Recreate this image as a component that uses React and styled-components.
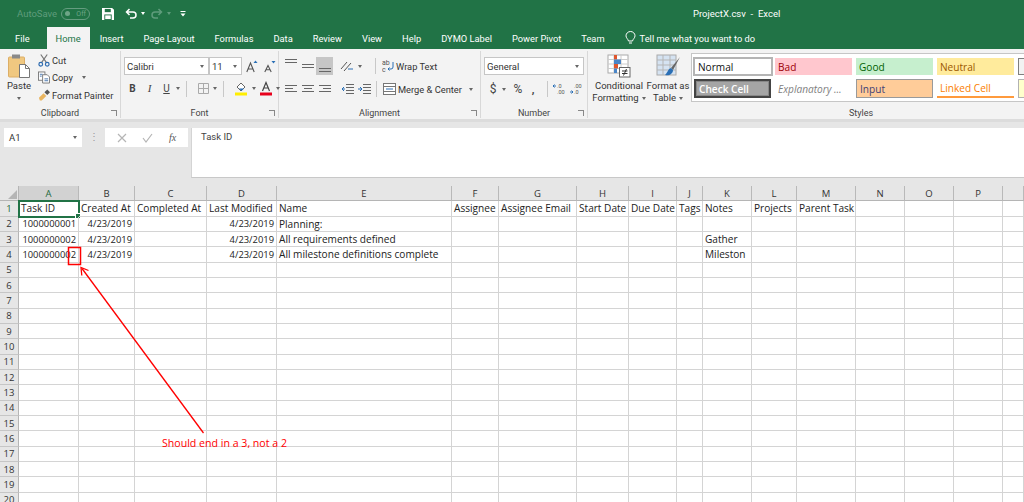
import React from 'react';
import styled, { createGlobalStyle } from 'styled-components';

const UI = 'Roboto, "Open Sans", sans-serif';
const SHEET = '"Open Sans", "Noto Sans", sans-serif';

const COLS = [
  ['A', 60], ['B', 56], ['C', 72], ['D', 70], ['E', 175], ['F', 47], ['G', 78], ['H', 52], ['I', 48],
  ['J', 26], ['K', 49], ['L', 45], ['M', 59], ['N', 49], ['O', 49], ['P', 49], ['Q', 21],
];

const ROWS = {
  1: { A: 'Task ID', B: 'Created At', C: 'Completed At', D: 'Last Modified', E: 'Name', F: 'Assignee', G: 'Assignee Email', H: 'Start Date', I: 'Due Date', J: 'Tags', K: 'Notes', L: 'Projects', M: 'Parent Task' },
  2: { A: '1000000001', B: '4/23/2019', D: '4/23/2019', E: 'Planning:' },
  3: { A: '1000000002', B: '4/23/2019', D: '4/23/2019', E: 'All requirements defined', K: 'Gather' },
  4: { A: '1000000002', B: '4/23/2019', D: '4/23/2019', E: 'All milestone definitions complete', K: 'Mileston' },
};

const TABS = ['File', 'Home', 'Insert', 'Page Layout', 'Formulas', 'Data', 'Review', 'View', 'Help', 'DYMO Label', 'Power Pivot', 'Team'];

const STYLES = [
  ['Normal', 'normal'], ['Bad', 'bad'], ['Good', 'good'], ['Neutral', 'neutral'], ['', 'calc'],
  ['Check Cell', 'check'], ['Explanatory ...', 'explain'], ['Input', 'input'], ['Linked Cell', 'linked'], ['', 'note'],
];

const STYLE_LOOK = {
  normal: 'background:#fff;color:#111;border:2px solid #b5b5b5;margin-right:2px;',
  bad: 'background:#ffc7ce;color:#9c0006;margin:1px 4px 1px 0;',
  good: 'background:#c6efce;color:#006100;margin:1px 4px 1px 0;',
  neutral: 'background:#ffeb9c;color:#9c5700;margin:1px 4px 1px 0;',
  calc: 'background:#f2f2f2;border:1px solid #7f7f7f;margin:1px 0;',
  check: 'background:#a5a5a5;color:#fff;font-weight:600;border:2px solid #444;outline:1px solid #888;outline-offset:-3px;margin:0 4px 0 1px;',
  explain: 'background:#fff;color:#7f7f7f;font-style:italic;margin-right:4px;',
  input: 'background:#ffcc99;color:#3f3f76;border:1px solid #9a9a9a;margin-right:4px;',
  linked: 'background:#fff;color:#fa7d00;border-bottom:2px solid #ff9a3c;margin-right:4px;',
  note: 'background:#ffffcc;border:1px solid #b2b2b2;',
};

const Global = createGlobalStyle`
  html, body { margin: 0; height: 100%; overflow: hidden; background: #fff; }
  #root { height: 100%; }
`;

const Page = styled.div`
  position: relative;
  width: 1024px;
  height: 502px;
  overflow: hidden;
  font-family: ${UI};
  color: #333;
`;

const Svg = styled.svg`
  display: block;
  flex: none;
`;

const Gap = styled.span`
  flex: none;
  width: ${p => p.$w}px;
`;

const TitleBar = styled.div`
  height: 27px;
  background: #217346;
  display: grid;
  grid-template-columns: 693px auto;
  align-items: center;
`;

const Quick = styled.div`
  display: flex;
  align-items: center;
  padding-left: 17px;
`;

const AutoSave = styled.span`
  width: 44px;
  font-size: 9.5px;
  color: #5f9c7c;
`;

const Toggle = styled.span`
  box-sizing: border-box;
  width: 29px;
  height: 12px;
  border: 1px solid #659d80;
  border-radius: 6px;
  display: flex;
  align-items: center;
  justify-content: space-between;
  padding: 0 3px;
  margin-right: 12px;
  font-size: 7px;
  color: #6ea587;
  &::before {
    content: '';
    width: 5px;
    height: 5px;
    border-radius: 50%;
    background: #6ea587;
  }
`;

const DocTitle = styled.div`
  font-size: 9.5px;
  color: #fff;
  white-space: pre;
`;

const TabBar = styled.div`
  height: 22px;
  background: #217346;
  display: flex;
  align-items: stretch;
`;

const Tab = styled.div`
  padding: 0 10px;
  display: flex;
  align-items: center;
  font-size: 9.3px;
  white-space: nowrap;
  color: #fff;
  ${p => p.$first && 'margin-left: 5px; margin-right: 7px;'}
  ${p => p.$active && 'background: #f3f3f3; color: #217346; padding: 0 9px;'}
`;

const TellMe = styled.div`
  display: flex;
  align-items: center;
  gap: 4px;
  margin-left: 10px;
  font-size: 9.3px;
  color: #fff;
`;

const Ribbon = styled.div`
  height: 70px;
  background: #f3f3f3;
  display: flex;
  border-bottom: 3px solid #dcdcdc;
  overflow: hidden;
`;

const Group = styled.div`
  position: relative;
  width: ${p => p.$w}px;
  flex: none;
  box-sizing: border-box;
  display: flex;
  flex-direction: column;
  border-right: ${p => (p.$last ? 'none' : '1px solid #d8d8d8')};
  margin: 2px 0 1px;
`;

const GroupBody = styled.div`
  flex: 1;
  display: flex;
  min-height: 0;
`;

const GroupName = styled.div`
  height: 14px;
  line-height: 18px;
  text-align: center;
  font-size: 9px;
  color: #444;
  ${p => p.$w && `width: ${p.$w}px; margin-left: ${p.$ml}px;`}
`;

const Launcher = styled.span`
  position: absolute;
  right: 3px;
  bottom: 2px;
  width: 5px;
  height: 5px;
  border-left: 1px solid #888;
  border-bottom: 1px solid #888;
  transform: rotate(180deg);
`;

const Stack = styled.div`
  display: flex;
  flex-direction: column;
  padding: ${p => p.$pad || 0};
`;

const Row = styled.div`
  display: flex;
  align-items: center;
  height: ${p => p.$h || 18}px;
  margin: ${p => p.$m || 0};
`;

const Big = styled.div`
  width: ${p => p.$w}px;
  flex: none;
  display: flex;
  flex-direction: column;
  align-items: center;
  font-size: 9.5px;
  line-height: 12px;
  text-align: center;
  white-space: nowrap;
  padding-top: ${p => p.$top || 2}px;
  & > svg { margin-bottom: 2px; }
`;

const Small = styled.div`
  display: flex;
  align-items: center;
  gap: ${p => (p.$gap === undefined ? 4 : p.$gap)}px;
  font-size: 9.3px;
  white-space: nowrap;
`;

const Caret = styled.span`
  flex: none;
  display: ${p => (p.$inline ? 'inline-block' : 'block')};
  width: 0;
  height: 0;
  border-left: 2.5px solid transparent;
  border-right: 2.5px solid transparent;
  border-top: 3px solid ${p => p.$c || '#666'};
  margin: ${p => p.$m || '0 0 0 4px'};
`;

const Combo = styled.div`
  box-sizing: border-box;
  width: ${p => p.$w}px;
  height: 18px;
  background: #fff;
  border: 1px solid #c6c6c6;
  display: flex;
  align-items: center;
  justify-content: space-between;
  padding: 0 4px 0 2px;
  font-size: 9.5px;
  margin-right: ${p => p.$mr || 0}px;
`;

const Glyph = styled.span`
  width: ${p => p.$w || 17}px;
  flex: none;
  text-align: center;
  font-family: ${p => (p.$serif ? '"Liberation Serif", serif' : UI)};
  font-size: ${p => p.$s || 10}px;
  font-weight: ${p => (p.$b ? 700 : 400)};
  font-style: ${p => (p.$i ? 'italic' : 'normal')};
  text-decoration: ${p => (p.$u ? 'underline' : 'none')};
  color: #444;
  line-height: 1;
`;

const ToolSep = styled.span`
  width: 1px;
  height: 16px;
  background: #c8c8c8;
  margin: 0 ${p => p.$r ?? 6}px 0 ${p => p.$l ?? 6}px;
  flex: none;
`;

const Slot = styled.span`
  box-sizing: border-box;
  width: ${p => p.$w || 17}px;
  height: 18px;
  display: flex;
  align-items: ${p => p.$at || 'center'};
  justify-content: center;
  flex: none;
  background: ${p => (p.$on ? '#c6c6c6' : 'transparent')};
`;

const Gallery = styled.div`
  margin: 2px 0 0 5px;
  width: 340px;
  height: 49px;
  box-sizing: border-box;
  background: #fff;
  border: 1px solid #c6c6c6;
  padding: 3px 0 0 1px;
  display: grid;
  grid-template-columns: 82px 81px 81px 81px 81px;
  grid-template-rows: 19px 19px;
  row-gap: 3px;
`;

const StyleCell = styled.div`
  box-sizing: border-box;
  display: flex;
  align-items: center;
  padding-left: 3px;
  font-family: ${SHEET};
  font-size: 10.1px;
  white-space: nowrap;
  overflow: hidden;
  ${p => STYLE_LOOK[p.$kind]}
`;

const FormulaArea = styled.div`
  height: 64px;
  background: #e6e6e6;
  box-sizing: border-box;
  padding: 6px 0 8px 4px;
  display: flex;
  align-items: flex-start;
`;

const NameBox = styled.div`
  box-sizing: border-box;
  width: 78px;
  height: 19px;
  background: #fff;
  display: flex;
  align-items: center;
  justify-content: space-between;
  padding: 0 5px;
  font-size: 9.5px;
`;

const Dots = styled.span`
  width: 23px;
  height: 19px;
  text-align: center;
  line-height: 18px;
  font-size: 10px;
  color: #999;
`;

const FxBox = styled.div`
  box-sizing: border-box;
  width: 83px;
  height: 19px;
  background: #fff;
  display: flex;
  align-items: center;
  justify-content: space-around;
  padding: 0 4px;
  margin-right: 3px;
  color: #b5b5b5;
`;

const Fx = styled.i`
  font-family: "Liberation Serif", serif;
  font-size: 10px;
  color: #555;
`;

const FormulaInput = styled.div`
  flex: 1;
  box-sizing: border-box;
  height: 50px;
  background: #fff;
  border-left: 1px solid #d4d4d4;
  border-bottom: 1px solid #c8c8c8;
  padding: 3px 9px;
  font-size: 9.5px;
  color: #444;
`;

const Sheet = styled.div`
  display: grid;
  grid-template-columns: 19px ${COLS.map(c => `${c[1]}px`).join(' ')};
  grid-auto-rows: 15.33px;
  font-family: ${SHEET};
  font-size: 10.1px;
  color: #222;
`;

const Corner = styled.div`
  background: #e6e6e6;
  border-right: 1px solid #b5b5b5;
  border-bottom: 1px solid #b5b5b5;
  position: relative;
  &::after {
    content: '';
    position: absolute;
    right: 1px;
    bottom: 1px;
    border-style: solid;
    border-width: 0 0 9px 9px;
    border-color: transparent transparent #b5b5b5 transparent;
  }
`;

const ColHead = styled.div`
  background: ${p => (p.$on ? '#d2d2d2' : '#e6e6e6')};
  border-right: 1px solid #b9b9b9;
  border-bottom: 1px solid ${p => (p.$on ? '#217346' : '#b5b5b5')};
  display: flex;
  align-items: center;
  justify-content: center;
  font-size: 9.5px;
  color: ${p => (p.$on ? '#1e6b41' : '#333')};
`;

const RowHead = styled.div`
  background: #e6e6e6;
  border-right: 1px solid #b5b5b5;
  border-bottom: 1px solid #c6c6c6;
  display: flex;
  align-items: center;
  justify-content: center;
  font-size: 9.5px;
  color: ${p => (p.$on ? '#1e6b41' : '#333')};
`;

const Cell = styled.div`
  position: relative;
  box-sizing: border-box;
  border-right: 1px solid #d4d4d4;
  border-bottom: 1px solid #d4d4d4;
  display: flex;
  align-items: center;
  justify-content: ${p => (p.$num ? 'flex-end' : 'flex-start')};
  padding: 0 2px;
  white-space: nowrap;
  ${p => p.$num && 'font-size: 9.4px;'}
  ${p => p.$active && `
    outline: 2px solid #217346;
    outline-offset: -1px;
    &::after {
      content: '';
      position: absolute;
      right: -3px;
      bottom: -3px;
      width: 4px;
      height: 4px;
      background: #217346;
      border: 1px solid #fff;
    }
  `}
`;

const Marks = styled.svg`
  position: absolute;
  inset: 0;
  pointer-events: none;
`;

const Note = styled.div`
  position: absolute;
  left: 162px;
  top: 436px;
  font-family: ${SHEET};
  font-size: 10.6px;
  color: #f00;
  white-space: nowrap;
`;

const PasteIcon = () => (
  <Svg width="24" height="24" viewBox="0 0 24 24">
    <rect x="1.500" y="3" width="16" height="20" rx="1" fill="#f0c880" stroke="#dcae66" />
    <rect x="5" y="0.500" width="8" height="4" fill="#8a8a8a" />
    <path d="M12.500 10.500h6l4 4v9h-10z" fill="#fff" stroke="#777" />
    <path d="M18.500 10.500v4h4" fill="none" stroke="#777" />
  </Svg>
);
const CutIcon = () => (
  <Svg width="12" height="13" viewBox="0 0 13 13" fill="none" stroke="#2f6cb0" strokeWidth="1.3">
    <path d="M3 0l6 8.500M10 0L4 8.500" stroke="#777" />
    <circle cx="3" cy="10.500" r="2" />
    <circle cx="10" cy="10.500" r="2" />
  </Svg>
);
const CopyIcon = () => (
  <Svg width="12" height="13" viewBox="0 0 13 13" fill="#fff" stroke="#777">
    <rect x="0.500" y="0.500" width="7" height="9" />
    <path d="M5 3.500h5l2.500 2.500v6.500H5z" />
    <path d="M2 3h3M2 5h2M7 8h4M7 10h4" stroke="#3f6fa8" />
  </Svg>
);
const BrushIcon = () => (
  <Svg width="12" height="12" viewBox="0 0 13 12">
    <path d="M1 9l5-5 3 3-5 5H2z" fill="#e9b560" />
    <path d="M7 3l3-3 3 3-3 3z" fill="#555" />
  </Svg>
);
const GrowIcon = ({ up }) => (
  <Svg width="12" height="13" viewBox="0 0 12 13">
    <path d={up ? 'M.8 12L4.500 3 8.200 12M2.200 9h4.600' : 'M.8 12L4 5.500 7.200 12M2 9.800h4'} fill="none" stroke="#555" strokeWidth="1.100" />
    <path d={up ? 'M7.500 3l2-2.500 2 2.500z' : 'M7.500 1h4l-2 2.500z'} fill="#2a6fb5" />
  </Svg>
);
const BorderIcon = () => (
  <Svg width="11" height="11" viewBox="0 0 11 11" fill="none" stroke="#aaa">
    <path d="M.5.500h10v10H.5zM5.500.500v10M.5 5.500h10" />
  </Svg>
);
const FillIcon = () => (
  <Svg width="13" height="15" viewBox="0 0 13 15">
    <path d="M2 6l4-4 4 4-4 4z" fill="#fff" stroke="#666" />
    <path d="M4 7.500h5l-2.500 2.500z" fill="#2a6fb5" />
    <rect x="0" y="11.500" width="12" height="3" fill="#ffee00" />
  </Svg>
);
const ColorIcon = () => (
  <Svg width="13" height="15" viewBox="0 0 13 15">
    <path d="M2.500 10L6 1.500 9.500 10M4 7h4" fill="none" stroke="#444" strokeWidth="1.2" />
    <rect x="0" y="11.500" width="12" height="3" fill="#e8001c" />
  </Svg>
);
const AlignIcon = ({ lines }) => (
  <Svg width="12" height="10" viewBox="0 0 12 10" stroke="#666" fill="none">
    {lines.map(([y, x1, x2]) => <path key={y} d={`M${x1} ${y}.5H${x2}`} />)}
  </Svg>
);
const OrientIcon = () => (
  <Svg width="14" height="12" viewBox="0 0 14 12" fill="none" stroke="#555">
    <path d="M1 9l6-7M4 11l7-8" />
    <path d="M8 9h5" stroke="#2a6fb5" />
  </Svg>
);
const WrapIcon = () => (
  <Svg width="13" height="14" viewBox="0 0 13 14">
    <text x="0" y="6" fontSize="7" fontFamily={UI} fill="#555">ab</text>
    <text x="0" y="13" fontSize="7" fontFamily={UI} fill="#555">c</text>
    <path d="M11 3v5a2 2 0 0 1-2 2H6M7.500 8.500L6 10l1.500 1.500" fill="none" stroke="#2a6fb5" />
  </Svg>
);
const IndentIcon = ({ inc }) => (
  <Svg width="13" height="10" viewBox="0 0 13 10" fill="none">
    <path d="M5 .5h8M5 3.500h8M5 6.500h8M5 9.500h8" stroke="#666" />
    <path d={inc ? 'M0 5h3M2 3l2 2-2 2' : 'M1 5h3M3 3L1 5l2 2'} stroke="#2a6fb5" />
  </Svg>
);
const MergeIcon = () => (
  <Svg width="13" height="12" viewBox="0 0 13 12" fill="#fff" stroke="#777">
    <rect x="0.500" y="0.500" width="12" height="11" />
    <path d="M.5 3.500h12M.5 8.500h12" />
    <path d="M3 6h7" stroke="#2a6fb5" />
  </Svg>
);
const DecimalIcon = ({ more }) => (
  <Svg width="12" height="12" viewBox="0 0 12 12">
    <text x="4" y="5" fontSize="5.500" fontFamily={UI} fill="#555">{more ? '.0' : '.00'}</text>
    <text x="4" y="11" fontSize="5.500" fontFamily={UI} fill="#555">{more ? '.00' : '.0'}</text>
    <path d={more ? 'M0 3h3M1.500 1.500L0 3l1.500 1.500' : 'M0 9h3M1.500 7.500L3 9l-1.500 1.500'} stroke="#2a6fb5" fill="none" />
  </Svg>
);
const CondIcon = () => (
  <Svg width="24" height="24" viewBox="0 0 24 24">
    <rect x="1" y="1" width="20" height="18" fill="#fff" stroke="#aaa" />
    <path d="M1 5.500h20M1 10h20M1 14.500h20M7 1v18M14 1v18" stroke="#ccc" />
    <rect x="7" y="1" width="3" height="4.500" fill="#e0562d" />
    <rect x="7" y="5.500" width="7" height="4.500" fill="#4a86c8" />
    <rect x="7" y="10" width="4" height="4.500" fill="#e0562d" />
    <rect x="7" y="14.500" width="3" height="4.500" fill="#4a86c8" />
    <rect x="12.500" y="13.500" width="10.500" height="9.500" fill="#fff" stroke="#666" />
    <path d="M15 17h5.500M15 19.500h5.500M19.500 15l-3 6.500" stroke="#333" fill="none" />
  </Svg>
);
const TableIcon = () => (
  <Svg width="25" height="24" viewBox="0 0 25 24">
    <rect x="1" y="1" width="19" height="20" fill="#d5e3f2" stroke="#aaa" />
    <path d="M1 6h19M1 11h19M1 16h19M7 1v20M14 1v20" stroke="#b5b5b5" />
    <path d="M24 3l-9 11 2 2z" fill="#666" />
    <path d="M15 14c-3 1-3 4-6 7 4 1 8-1 8-5z" fill="#2a6fb5" />
  </Svg>
);
const Bulb = () => (
  <Svg width="11" height="14" viewBox="0 0 11 14" fill="none" stroke="#fff">
    <path d="M3.500 10C3 8 1 7 1 4.800a4.500 4.300 0 0 1 9 0C10 7 8 8 7.500 10zM4 12h3" />
  </Svg>
);
const SaveIcon = () => (
  <Svg width="12" height="12" viewBox="0 0 13 13">
    <path d="M0 0h11l2 2v11H0z" fill="#fff" />
    <rect x="3" y="1" width="6.500" height="3.500" fill="#217346" />
    <rect x="2.500" y="7" width="8" height="6" fill="#217346" />
    <rect x="3.500" y="8" width="6" height="4" fill="#fff" />
  </Svg>
);
const Undo = styled(Svg)`
  transform: ${p => (p.$redo ? 'scaleX(-1)' : 'none')};
`;
const UndoIcon = ({ redo, dim }) => (
  <Undo $redo={redo} width="12" height="11" viewBox="0 0 12 11" fill="none" stroke={dim ? '#5f9c7c' : '#fff'} strokeWidth="1.500">
    <path d="M2 4h6a3 3 0 0 1 0 6H5M4.500 1L1.500 4l3 3" />
  </Undo>
);
const CustomizeIcon = () => (
  <Svg width="6" height="6" viewBox="0 0 6 6" fill="#fff">
    <path d="M.5 0h5v1h-5zM.5 2.500h5L3 5.500z" />
  </Svg>
);

const AppGrid = () => {
  const rows = Array.from({ length: 20 }, (_, i) => i + 1);
  return (
    <Sheet>
      <Corner />
      {COLS.map(([c], i) => <ColHead key={c} $on={i === 0}>{i < 16 ? c : ''}</ColHead>)}
      {rows.map(r => (
        <React.Fragment key={r}>
          <RowHead $on={r === 1}>{r}</RowHead>
          {COLS.map(([c]) => {
            const data = ROWS[r] || {};
            const num = r > 1 && (c === 'A' || c === 'B' || c === 'D');
            return <Cell key={c} $num={num} $active={r === 1 && c === 'A'}>{data[c]}</Cell>;
          })}
        </React.Fragment>
      ))}
    </Sheet>
  );
};

export default function App() {
  return (
    <Page>
      <Global />
      <TitleBar>
        <Quick>
          <AutoSave>AutoSave</AutoSave>
          <Toggle>Off</Toggle>
          <SaveIcon />
          <Gap $w={11} />
          <UndoIcon />
          <Caret $c="#fff" />
          <Gap $w={6} />
          <UndoIcon redo dim />
          <Caret $c="#5f9c7c" />
          <Gap $w={9} />
          <CustomizeIcon />
        </Quick>
        <DocTitle>ProjectX.csv  -  Excel</DocTitle>
      </TitleBar>

      <TabBar>
        {TABS.map((t, i) => <Tab key={t} $first={i === 0} $active={t === 'Home'}>{t}</Tab>)}
        <TellMe><Bulb />Tell me what you want to do</TellMe>
      </TabBar>

      <Ribbon>
        <Group $w={121}>
          <GroupBody>
            <Big $w={38} $top={3}>
              <PasteIcon />
              Paste
              <Caret $m="5px 0 0 0" />
            </Big>
            <Stack $pad="1px 0 0 0">
              <Row><Small $gap={2}><CutIcon />Cut</Small></Row>
              <Row><Small $gap={2}><CopyIcon />Copy<Caret $m="0 0 0 7px" /></Small></Row>
              <Row><Small $gap={2}><BrushIcon />Format Painter</Small></Row>
            </Stack>
          </GroupBody>
          <GroupName>Clipboard</GroupName>
          <Launcher />
        </Group>

        <Group $w={158}>
          <GroupBody>
            <Stack $pad="6px 0 0 3px">
              <Row $m="0 0 6px 0">
                <Combo $w={85}>Calibri<Caret /></Combo>
                <Combo $w={33} $mr={4}>11<Caret /></Combo>
                <GrowIcon up />
                <Gap $w={6} />
                <GrowIcon />
              </Row>
              <Row $h={15}>
                <Glyph $b>B</Glyph>
                <Glyph $i $serif $s={11}>I</Glyph>
                <Glyph $u>U</Glyph>
                <Caret $m="0 0 0 1px" />
                <ToolSep />
                <Gap $w={2} />
                <Slot><BorderIcon /></Slot>
                <Caret $m="0 0 0 1px" />
                <ToolSep />
                <Gap $w={3} />
                <Slot><FillIcon /></Slot>
                <Caret $m="0 0 0 2px" />
                <Gap $w={2} />
                <Slot><ColorIcon /></Slot>
                <Caret $m="0 0 0 1px" />
              </Row>
            </Stack>
          </GroupBody>
          <GroupName>Font</GroupName>
          <Launcher />
        </Group>

        <Group $w={202}>
          <GroupBody>
            <Stack $pad="6px 0 0 3px">
              <Row $m="0 0 5px 0">
                <Slot $at="flex-start"><AlignIcon lines={[[2, 0, 12], [5, 0, 12]]} /></Slot>
                <Slot><AlignIcon lines={[[3, 0, 12], [6, 0, 12]]} /></Slot>
                <Slot $on $at="flex-end"><AlignIcon lines={[[3, 0, 12], [6, 0, 12]]} /></Slot>
                <Gap $w={7} />
                <OrientIcon />
                <Caret />
                <ToolSep $l={13} />
                <Small $gap={1}><WrapIcon />Wrap Text</Small>
              </Row>
              <Row>
                <Slot><AlignIcon lines={[[1, 0, 12], [4, 0, 8], [7, 0, 12]]} /></Slot>
                <Slot><AlignIcon lines={[[1, 0, 12], [4, 2, 10], [7, 0, 12]]} /></Slot>
                <Slot><AlignIcon lines={[[1, 0, 12], [4, 4, 12], [7, 0, 12]]} /></Slot>
                <Gap $w={6} />
                <Slot><IndentIcon /></Slot>
                <Slot><IndentIcon inc /></Slot>
                <ToolSep $l={3} />
                <Small $gap={2}><MergeIcon />Merge &amp; Center<Caret $m="0 0 0 5px" /></Small>
              </Row>
            </Stack>
          </GroupBody>
          <GroupName>Alignment</GroupName>
          <Launcher />
        </Group>

        <Group $w={107}>
          <GroupBody>
            <Stack $pad="6px 0 0 3px">
              <Row $m="0 0 5px 0"><Combo $w={100}>General<Caret /></Combo></Row>
              <Row>
                <Glyph $w={18} $s={12}>$</Glyph>
                <Caret $m="0 4px 0 0" />
                <Glyph $w={16} $s={12}>%</Glyph>
                <Glyph $w={14} $s={11} $b>,</Glyph>
                <ToolSep $l={7} $r={2} />
                <Slot><DecimalIcon more /></Slot>
                <Slot><DecimalIcon /></Slot>
              </Row>
            </Stack>
          </GroupBody>
          <GroupName>Number</GroupName>
          <Launcher />
        </Group>

        <Group $w={436} $last>
          <GroupBody>
            <Big $w={62} $top={3}>
              <CondIcon />
              Conditional
              <span>Formatting<Caret $inline $m="0 0 1px 3px" /></span>
            </Big>
            <Big $w={36} $top={3}>
              <TableIcon />
              Format as
              <span>Table<Caret $inline $m="0 0 1px 3px" /></span>
            </Big>
            <Gallery>
              {STYLES.map(([label, kind]) => <StyleCell key={kind} $kind={kind}>{label}</StyleCell>)}
            </Gallery>
          </GroupBody>
          <GroupName $w={340} $ml={103}>Styles</GroupName>
        </Group>
      </Ribbon>

      <FormulaArea>
        <NameBox>A1<Caret /></NameBox>
        <Dots>⋮</Dots>
        <FxBox>
          <Svg width="10" height="10" viewBox="0 0 10 10" stroke="currentColor" strokeWidth="1.200"><path d="M1 1l8 8M9 1L1 9" /></Svg>
          <Svg width="11" height="10" viewBox="0 0 11 10" stroke="currentColor" strokeWidth="1.200" fill="none"><path d="M1 5l3 4 6-8" /></Svg>
          <Fx>fx</Fx>
        </FxBox>
        <FormulaInput>Task ID</FormulaInput>
      </FormulaArea>

      <AppGrid />

      <Marks width="1024" height="502" viewBox="0 0 1024 502" fill="none" stroke="#f00">
        <rect x="68.500" y="247.500" width="12" height="17" strokeWidth="1.500" />
        <path d="M203.500 433L82 268.500" strokeWidth="1.300" />
        <path d="M88.500 270.500L81 267.500 81.800 275.500" strokeWidth="1.300" />
      </Marks>
      <Note>Should end in a 3, not a 2</Note>
    </Page>
  );
}
